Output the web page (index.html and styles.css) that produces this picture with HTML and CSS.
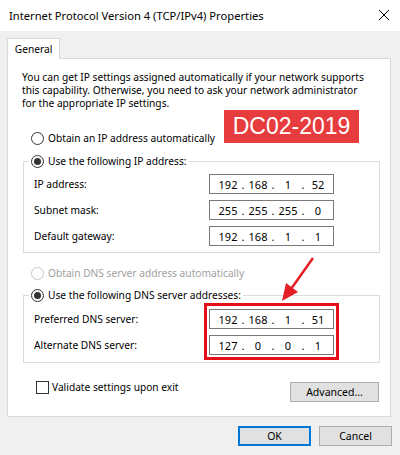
FILE: index.html
```html
<!DOCTYPE html>
<html lang="en">
<head>
    <meta charset="UTF-8">
    <title>Internet Protocol Version 4 (TCP/IPv4) Properties</title>
    <link rel="stylesheet" href="styles.css">
</head>
<body>
    <div class="window">
        <div class="titlebar">
            <span class="title">Internet Protocol Version 4 (TCP/IPv4) Properties</span>
            <svg class="close" width="12" height="12" viewBox="0 0 12 12">
                <path d="M1 1 L11 11 M11 1 L1 11" stroke="#000" stroke-width="1" fill="none"/>
            </svg>
        </div>

        <div class="client">
            <div class="tabs">
                <div class="tab">General</div>
            </div>

            <div class="panel">
                <p class="intro">You can get IP settings assigned automatically if your network supports<br>this capability. Otherwise, you need to ask your network administrator<br>for the appropriate IP settings.</p>

                <label class="option first"><span class="radio"></span>Obtain an IP address automatically</label>

                <div class="group ip-group">
                    <label class="option legend"><span class="radio checked"></span>Use the following IP address:</label>
                    <div class="field">
                        <span class="field-label">IP address:</span>
                        <div class="ip"><span>192</span><i>.</i><span>168</span><i>.</i><span>1</span><i>.</i><span>52</span></div>
                    </div>
                    <div class="field">
                        <span class="field-label">Subnet mask:</span>
                        <div class="ip"><span>255</span><i>.</i><span>255</span><i>.</i><span>255</span><i>.</i><span>0</span></div>
                    </div>
                    <div class="field">
                        <span class="field-label">Default gateway:</span>
                        <div class="ip"><span>192</span><i>.</i><span>168</span><i>.</i><span>1</span><i>.</i><span>1</span></div>
                    </div>
                </div>

                <label class="option disabled"><span class="radio"></span>Obtain DNS server address automatically</label>

                <div class="group dns-group">
                    <label class="option legend"><span class="radio checked"></span>Use the following DNS server addresses:</label>
                    <div class="field">
                        <span class="field-label">Preferred DNS server:</span>
                        <div class="ip"><span>192</span><i>.</i><span>168</span><i>.</i><span>1</span><i>.</i><span>51</span></div>
                    </div>
                    <div class="field">
                        <span class="field-label">Alternate DNS server:</span>
                        <div class="ip"><span>127</span><i>.</i><span>0</span><i>.</i><span>0</span><i>.</i><span>1</span></div>
                    </div>
                </div>

                <div class="bottom-row">
                    <label class="check"><span class="checkbox"></span>Validate settings upon exit</label>
                    <button class="btn advanced">Advanced...</button>
                </div>
            </div>

            <div class="actions">
                <button class="btn default">OK</button>
                <button class="btn">Cancel</button>
            </div>
        </div>

        <!-- annotations drawn over the dialog -->
        <div class="badge">DC02-2019</div>
        <div class="highlight"></div>
        <svg class="arrow" width="40" height="50" viewBox="0 0 40 50">
            <line x1="35" y1="3" x2="13" y2="34" stroke="#e41e26" stroke-width="2.5"/>
            <polygon points="4,46 8,28 20,37" fill="#e41e26"/>
        </svg>
    </div>
</body>
</html>
```

FILE: styles.css
```css
body {
    margin: 0;
    padding: 0;
    background-color: #f0f0f0;
    font-family: 'Noto Sans', 'Segoe UI', sans-serif;
    font-size: 10.2px;
    color: #000;
}

.window {
    position: relative;
    width: 400px;
    height: 455px;
    background-color: #f0f0f0;
    overflow: hidden;
}

.titlebar {
    height: 31px;
    background-color: #ffffff;
    display: flex;
    align-items: center;
    justify-content: space-between;
    padding: 0 10px 0 9px;
    box-sizing: border-box;
}

.title {
    font-size: 11.2px;
    margin-top: -1px;
}

.close {
    margin-top: -1px;
}

.client {
    padding: 7px 9px 0 7px;
}

.tabs {
    display: flex;
}

.tab {
    position: relative;
    z-index: 1;
    width: 51px;
    height: 20px;
    margin-bottom: -1px;
    border: 1px solid #d9d9d9;
    border-bottom: none;
    background-color: #ffffff;
    text-align: center;
    line-height: 20px;
}

.panel {
    background-color: #ffffff;
    border: 1px solid #d9d9d9;
    height: 357px;
    box-sizing: content-box;
}

.intro {
    margin: 12px 0 0 14px;
    line-height: 13px;
    white-space: nowrap;
}

.option {
    display: flex;
    align-items: center;
    height: 16px;
    gap: 4px;
}

.option.first {
    margin: 20px 0 0 23px;
}

.option.disabled {
    margin: 12px 0 0 23px;
    color: #a0a0a0;
}

.option.disabled .radio {
    border-color: #c4c4c4;
}

.radio {
    width: 11px;
    height: 11px;
    border: 1px solid #333;
    border-radius: 50%;
    display: flex;
    align-items: center;
    justify-content: center;
    background-color: #fff;
}

.radio.checked::after {
    content: "";
    width: 7px;
    height: 7px;
    border-radius: 50%;
    background-color: #333;
}

.group {
    margin: 15px 10px 0 15px;
    border: 1px solid #dcdcdc;
    padding: 0 0 6px 0;
}

.group .legend {
    width: fit-content;
    margin: -9px 0 0 5px;
    padding: 0 2px;
    background-color: #fff;
}

.dns-group {
    margin-top: 14px;
    padding-bottom: 7px;
}

.field {
    display: flex;
    align-items: center;
    justify-content: space-between;
    height: 20px;
    margin-top: 6px;
    padding: 0 45px 0 10px;
}

.group .legend + .field {
    margin-top: 5px;
}

.dns-group .legend + .field {
    margin-top: 6px;
}

.ip {
    display: flex;
    align-items: center;
    width: 118px;
    height: 18px;
    border: 1px solid #7a7a7a;
    padding-left: 5px;
    font-size: 11px;
}

.ip span {
    width: 26px;
    text-align: center;
}

.ip i {
    font-style: normal;
    width: 4px;
    text-align: center;
}

.bottom-row {
    display: flex;
    justify-content: space-between;
    align-items: flex-start;
    margin: 19px 11px 0 28px;
}

.check {
    display: flex;
    align-items: center;
    gap: 3px;
    margin-top: -2px;
}

.checkbox {
    width: 11px;
    height: 11px;
    border: 1px solid #333;
    background-color: #fff;
}

.btn {
    font-family: 'Noto Sans', 'Segoe UI', sans-serif;
    font-size: 10.5px;
    background-color: #e1e1e1;
    border: 1px solid #adadad;
    height: 20px;
    padding: 0;
    color: #000;
}

.advanced {
    width: 89px;
}

.actions {
    display: flex;
    justify-content: flex-end;
    gap: 8px;
    margin-top: 9px;
    margin-right: -1px;
}

.actions .btn {
    width: 73px;
}

.btn.default {
    border: 2px solid #0078d7;
}

.badge {
    position: absolute;
    left: 224px;
    top: 110px;
    width: 135px;
    height: 33px;
    background-color: #e73c3e;
    color: #fff;
    font-family: 'Liberation Sans', Arial, sans-serif;
    font-size: 23px;
    line-height: 33px;
    text-align: center;
}

.highlight {
    position: absolute;
    left: 204px;
    top: 303px;
    width: 129px;
    height: 51px;
    border: 3px solid #e3101b;
}

.arrow {
    position: absolute;
    left: 278px;
    top: 255px;
}
```
